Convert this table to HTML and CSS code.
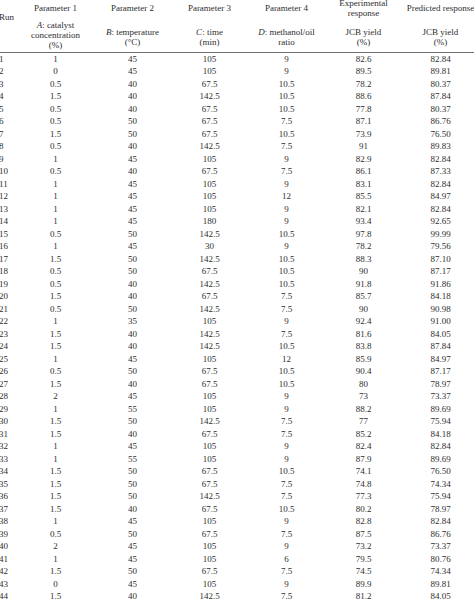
FILE: index.html
```html
<!DOCTYPE html>
<html lang="en">
<head>
<meta charset="utf-8">
<title>Design matrix</title>
<link rel="stylesheet" href="styles.css">
</head>
<body>
<table class="matrix">
  <colgroup>
    <col class="col-run">
    <col class="col-data"><col class="col-data"><col class="col-data">
    <col class="col-data"><col class="col-data"><col class="col-data">
  </colgroup>
  <thead>
    <tr class="head-top">
      <th class="run-head" rowspan="2">Run</th>
      <th>Parameter 1</th>
      <th>Parameter 2</th>
      <th>Parameter 3</th>
      <th>Parameter 4</th>
      <th>Experimental<br>response</th>
      <th>Predicted response</th>
    </tr>
    <tr class="head-sub">
      <th><i>A</i>: catalyst<br>concentration<br>(%)</th>
      <th class="two"><i>B</i>: temperature<br>(°C)</th>
      <th class="two"><i>C</i>: time<br>(min)</th>
      <th class="two"><i>D</i>: methanol/oil<br>ratio</th>
      <th class="two">JCB yield<br>(%)</th>
      <th class="two">JCB yield<br>(%)</th>
    </tr>
  </thead>
  <tbody>
    <tr><td class="run">1</td><td>1</td><td>45</td><td>105</td><td>9</td><td>82.6</td><td>82.84</td></tr>
    <tr><td class="run">2</td><td>0</td><td>45</td><td>105</td><td>9</td><td>89.5</td><td>89.81</td></tr>
    <tr><td class="run">3</td><td>0.5</td><td>40</td><td>67.5</td><td>10.5</td><td>78.2</td><td>80.37</td></tr>
    <tr><td class="run">4</td><td>1.5</td><td>40</td><td>142.5</td><td>10.5</td><td>88.6</td><td>87.84</td></tr>
    <tr><td class="run">5</td><td>0.5</td><td>40</td><td>67.5</td><td>10.5</td><td>77.8</td><td>80.37</td></tr>
    <tr><td class="run">6</td><td>0.5</td><td>50</td><td>67.5</td><td>7.5</td><td>87.1</td><td>86.76</td></tr>
    <tr><td class="run">7</td><td>1.5</td><td>50</td><td>67.5</td><td>10.5</td><td>73.9</td><td>76.50</td></tr>
    <tr><td class="run">8</td><td>0.5</td><td>40</td><td>142.5</td><td>7.5</td><td>91</td><td>89.83</td></tr>
    <tr><td class="run">9</td><td>1</td><td>45</td><td>105</td><td>9</td><td>82.9</td><td>82.84</td></tr>
    <tr><td class="run">10</td><td>0.5</td><td>40</td><td>67.5</td><td>7.5</td><td>86.1</td><td>87.33</td></tr>
    <tr><td class="run">11</td><td>1</td><td>45</td><td>105</td><td>9</td><td>83.1</td><td>82.84</td></tr>
    <tr><td class="run">12</td><td>1</td><td>45</td><td>105</td><td>12</td><td>85.5</td><td>84.97</td></tr>
    <tr><td class="run">13</td><td>1</td><td>45</td><td>105</td><td>9</td><td>82.1</td><td>82.84</td></tr>
    <tr><td class="run">14</td><td>1</td><td>45</td><td>180</td><td>9</td><td>93.4</td><td>92.65</td></tr>
    <tr><td class="run">15</td><td>0.5</td><td>50</td><td>142.5</td><td>10.5</td><td>97.8</td><td>99.99</td></tr>
    <tr><td class="run">16</td><td>1</td><td>45</td><td>30</td><td>9</td><td>78.2</td><td>79.56</td></tr>
    <tr><td class="run">17</td><td>1.5</td><td>50</td><td>142.5</td><td>10.5</td><td>88.3</td><td>87.10</td></tr>
    <tr><td class="run">18</td><td>0.5</td><td>50</td><td>67.5</td><td>10.5</td><td>90</td><td>87.17</td></tr>
    <tr><td class="run">19</td><td>0.5</td><td>40</td><td>142.5</td><td>10.5</td><td>91.8</td><td>91.86</td></tr>
    <tr><td class="run">20</td><td>1.5</td><td>40</td><td>67.5</td><td>7.5</td><td>85.7</td><td>84.18</td></tr>
    <tr><td class="run">21</td><td>0.5</td><td>50</td><td>142.5</td><td>7.5</td><td>90</td><td>90.98</td></tr>
    <tr><td class="run">22</td><td>1</td><td>35</td><td>105</td><td>9</td><td>92.4</td><td>91.00</td></tr>
    <tr><td class="run">23</td><td>1.5</td><td>40</td><td>142.5</td><td>7.5</td><td>81.6</td><td>84.05</td></tr>
    <tr><td class="run">24</td><td>1.5</td><td>40</td><td>142.5</td><td>10.5</td><td>83.8</td><td>87.84</td></tr>
    <tr><td class="run">25</td><td>1</td><td>45</td><td>105</td><td>12</td><td>85.9</td><td>84.97</td></tr>
    <tr><td class="run">26</td><td>0.5</td><td>50</td><td>67.5</td><td>10.5</td><td>90.4</td><td>87.17</td></tr>
    <tr><td class="run">27</td><td>1.5</td><td>40</td><td>67.5</td><td>10.5</td><td>80</td><td>78.97</td></tr>
    <tr><td class="run">28</td><td>2</td><td>45</td><td>105</td><td>9</td><td>73</td><td>73.37</td></tr>
    <tr><td class="run">29</td><td>1</td><td>55</td><td>105</td><td>9</td><td>88.2</td><td>89.69</td></tr>
    <tr><td class="run">30</td><td>1.5</td><td>50</td><td>142.5</td><td>7.5</td><td>77</td><td>75.94</td></tr>
    <tr><td class="run">31</td><td>1.5</td><td>40</td><td>67.5</td><td>7.5</td><td>85.2</td><td>84.18</td></tr>
    <tr><td class="run">32</td><td>1</td><td>45</td><td>105</td><td>9</td><td>82.4</td><td>82.84</td></tr>
    <tr><td class="run">33</td><td>1</td><td>55</td><td>105</td><td>9</td><td>87.9</td><td>89.69</td></tr>
    <tr><td class="run">34</td><td>1.5</td><td>50</td><td>67.5</td><td>10.5</td><td>74.1</td><td>76.50</td></tr>
    <tr><td class="run">35</td><td>1.5</td><td>50</td><td>67.5</td><td>7.5</td><td>74.8</td><td>74.34</td></tr>
    <tr><td class="run">36</td><td>1.5</td><td>50</td><td>142.5</td><td>7.5</td><td>77.3</td><td>75.94</td></tr>
    <tr><td class="run">37</td><td>1.5</td><td>40</td><td>67.5</td><td>10.5</td><td>80.2</td><td>78.97</td></tr>
    <tr><td class="run">38</td><td>1</td><td>45</td><td>105</td><td>9</td><td>82.8</td><td>82.84</td></tr>
    <tr><td class="run">39</td><td>0.5</td><td>50</td><td>67.5</td><td>7.5</td><td>87.5</td><td>86.76</td></tr>
    <tr><td class="run">40</td><td>2</td><td>45</td><td>105</td><td>9</td><td>73.2</td><td>73.37</td></tr>
    <tr><td class="run">41</td><td>1</td><td>45</td><td>105</td><td>6</td><td>79.5</td><td>80.76</td></tr>
    <tr><td class="run">42</td><td>1.5</td><td>50</td><td>67.5</td><td>7.5</td><td>74.5</td><td>74.34</td></tr>
    <tr><td class="run">43</td><td>0</td><td>45</td><td>105</td><td>9</td><td>89.9</td><td>89.81</td></tr>
    <tr><td class="run">44</td><td>1.5</td><td>40</td><td>142.5</td><td>7.5</td><td>81.2</td><td>84.05</td></tr>
  </tbody>
</table>
</body>
</html>
```

FILE: styles.css
```css
html, body {
  margin: 0;
  padding: 0;
  background: #ffffff;
  overflow: hidden;
}

.matrix {
  border-collapse: collapse;
  border-spacing: 0;
  table-layout: fixed;
  width: 480px;
  margin: -2.5px 0 0 -1px;
  font-family: "Liberation Serif", "Times New Roman", serif;
  font-size: 9px;
  line-height: 10px;
  color: #2e2e2e;
}

.col-run { width: 18px; }
.col-data { width: 77px; }

.matrix th {
  font-weight: normal;
  padding: 0;
  text-align: center;
  vertical-align: middle;
  white-space: nowrap;
}

.head-top th { height: 21px; }

.head-sub th {
  height: 30px;
  border-bottom: 1px solid #6f6f6f;
}

.head-sub th.two { padding-top: 3px; }

.matrix th.run-head {
  text-align: left;
  vertical-align: top;
  padding-top: 14px;
  border-bottom: 1px solid #6f6f6f;
}

.matrix td {
  height: 12.5px;
  line-height: 12.5px;
  padding: 0;
  text-align: center;
  white-space: nowrap;
}

.matrix td.run { text-align: left; }
```
